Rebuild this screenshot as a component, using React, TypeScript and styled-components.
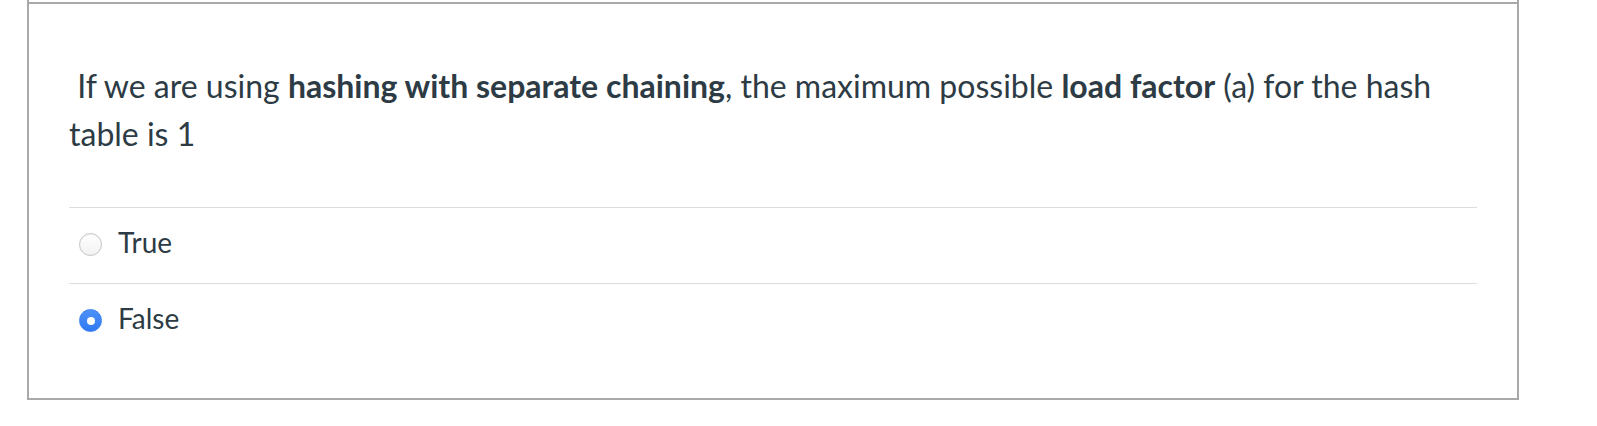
import React from "react";
import styled, { createGlobalStyle } from "styled-components";

const GlobalStyle = createGlobalStyle`
  html, body {
    margin: 0;
    padding: 0;
    background: #ffffff;
  }
  body {
    font-family: Lato, "Noto Sans", "Liberation Sans", sans-serif;
    color: #2d3b45;
  }
`;

const Page = styled.div`
  display: flex;
  flex-direction: column;
  padding-left: 27px;
  width: 1492px;
`;

const PrevCardEdge = styled.div`
  height: 2px;
  border-left: 2px solid #a9a9a9;
  border-right: 2px solid #a9a9a9;
`;

const Card = styled.section`
  box-sizing: border-box;
  border: 2px solid #a9a9a9;
  padding: 0 40px 39px 40px;
  display: flex;
  flex-direction: column;
`;

const QuestionText = styled.p`
  margin: 58px 0 49px 0;
  font-size: 32px;
  line-height: 48px;
  font-weight: 400;
  color: #2d3b45;
`;

const Strong = styled.strong`
  font-weight: 700;
`;

const AnswerList = styled.div`
  display: flex;
  flex-direction: column;
`;

const AnswerRow = styled.label`
  display: flex;
  align-items: center;
  height: 75px;
  border-top: 1px solid #dcdcdc;
  padding-left: 10px;
  gap: 16px;
`;

const Radio = styled.span<{ $checked?: boolean }>`
  box-sizing: border-box;
  flex: none;
  width: 23px;
  height: 23px;
  border-radius: 50%;
  display: flex;
  align-items: center;
  justify-content: center;
  margin-top: -2px;
  ${({ $checked }) =>
    $checked
      ? `
    background: linear-gradient(180deg, #4d92f8 0%, #3079f2 100%);
    border: 1px solid #3a80f2;
  `
      : `
    background: linear-gradient(180deg, #ffffff 0%, #f2f2f2 100%);
    border: 1px solid #c4c4c4;
    box-shadow: inset 0 1px 1px rgba(0,0,0,0.05);
  `}
`;

const RadioDot = styled.span`
  width: 8px;
  height: 8px;
  border-radius: 50%;
  background: #ffffff;
`;

const AnswerLabel = styled.span`
  font-size: 28px;
  line-height: 36px;
  margin-bottom: 8px;
  color: #2d3b45;
`;

const answers = [
  { text: "True", checked: false },
  { text: "False", checked: true },
];

export default function App() {
  return (
    <>
      <GlobalStyle />
      <Page>
        <PrevCardEdge />
        <Card>
          <QuestionText>
            {"\u00a0"}If we are using <Strong>hashing with separate chaining</Strong>, the maximum
            possible <Strong>load factor</Strong> (a) for the hash table is 1
          </QuestionText>
          <AnswerList>
            {answers.map((a) => (
              <AnswerRow key={a.text}>
                <Radio $checked={a.checked}>{a.checked && <RadioDot />}</Radio>
                <AnswerLabel>{a.text}</AnswerLabel>
              </AnswerRow>
            ))}
          </AnswerList>
        </Card>
      </Page>
    </>
  );
}
